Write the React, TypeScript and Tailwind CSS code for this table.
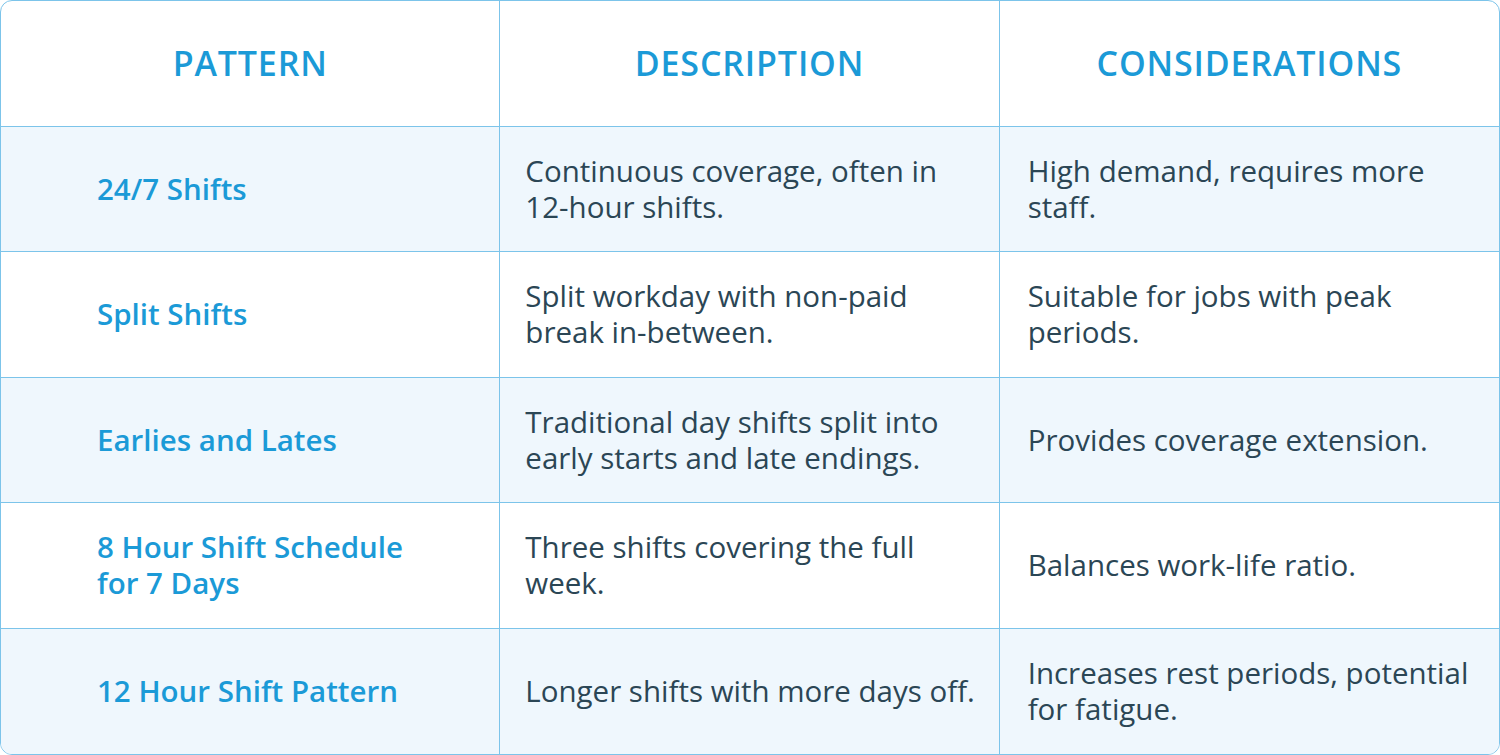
const ROWS = [
  {
    pattern: '24/7 Shifts',
    description: 'Continuous coverage, often in\n12-hour shifts.',
    considerations: 'High demand, requires more staff.',
  },
  {
    pattern: 'Split Shifts',
    description: 'Split workday with non-paid\nbreak in-between.',
    considerations: 'Suitable for jobs with peak periods.',
  },
  {
    pattern: 'Earlies and Lates',
    description: 'Traditional day shifts split into early starts and late endings.',
    considerations: 'Provides coverage extension.',
  },
  {
    pattern: '8 Hour Shift Schedule for 7 Days',
    description: 'Three shifts covering the full week.',
    considerations: 'Balances work-life ratio.',
  },
  {
    pattern: '12 Hour Shift Pattern',
    description: 'Longer shifts with more days off.',
    considerations: 'Increases rest periods, potential for fatigue.',
  },
];

const HEADERS = ['PATTERN', 'DESCRIPTION', 'CONSIDERATIONS'];

export default function App() {
  return (
    <div className="w-[1500px] h-[755px] bg-white font-['Open_Sans',sans-serif]">
      <div className="h-full border border-[#7cc4ea] rounded-[12px] overflow-hidden grid grid-cols-3 grid-rows-[repeat(6,1fr)]">
        {/* Header */}
        {HEADERS.map((h, i) => (
          <div
            key={h}
            className={`flex items-center justify-center border-b border-[#7cc4ea] ${i < 2 ? 'border-r' : ''} text-[34px] font-semibold tracking-[0.025em] text-[#1b9ad7]`}
          >
            {h}
          </div>
        ))}

        {ROWS.map((row, idx) => {
          const bg = idx % 2 === 0 ? 'bg-[#eff7fd]' : 'bg-white';
          const last = idx === ROWS.length - 1;
          const edge = last ? '' : 'border-b';
          return [
            <div
              key={`${idx}-p`}
              className={`${bg} ${edge} border-r border-[#7cc4ea] flex items-center pl-[96px] text-[29.5px] leading-[36px] font-semibold text-[#1b9ad7]`}
            >
              <p className="max-w-[330px]">{row.pattern}</p>
            </div>,
            <div
              key={`${idx}-d`}
              className={`${bg} ${edge} border-r border-[#7cc4ea] flex items-center pl-[25px] text-[29.5px] leading-[36px] text-[#2b4655]`}
            >
              <p className="max-w-[460px] whitespace-pre-line">{row.description}</p>
            </div>,
            <div
              key={`${idx}-c`}
              className={`${bg} ${edge} border-[#7cc4ea] flex items-center pl-[28px] text-[29.5px] leading-[36px] text-[#2b4655]`}
            >
              <p className="max-w-[460px]">{row.considerations}</p>
            </div>,
          ];
        })}
      </div>
    </div>
  );
}
